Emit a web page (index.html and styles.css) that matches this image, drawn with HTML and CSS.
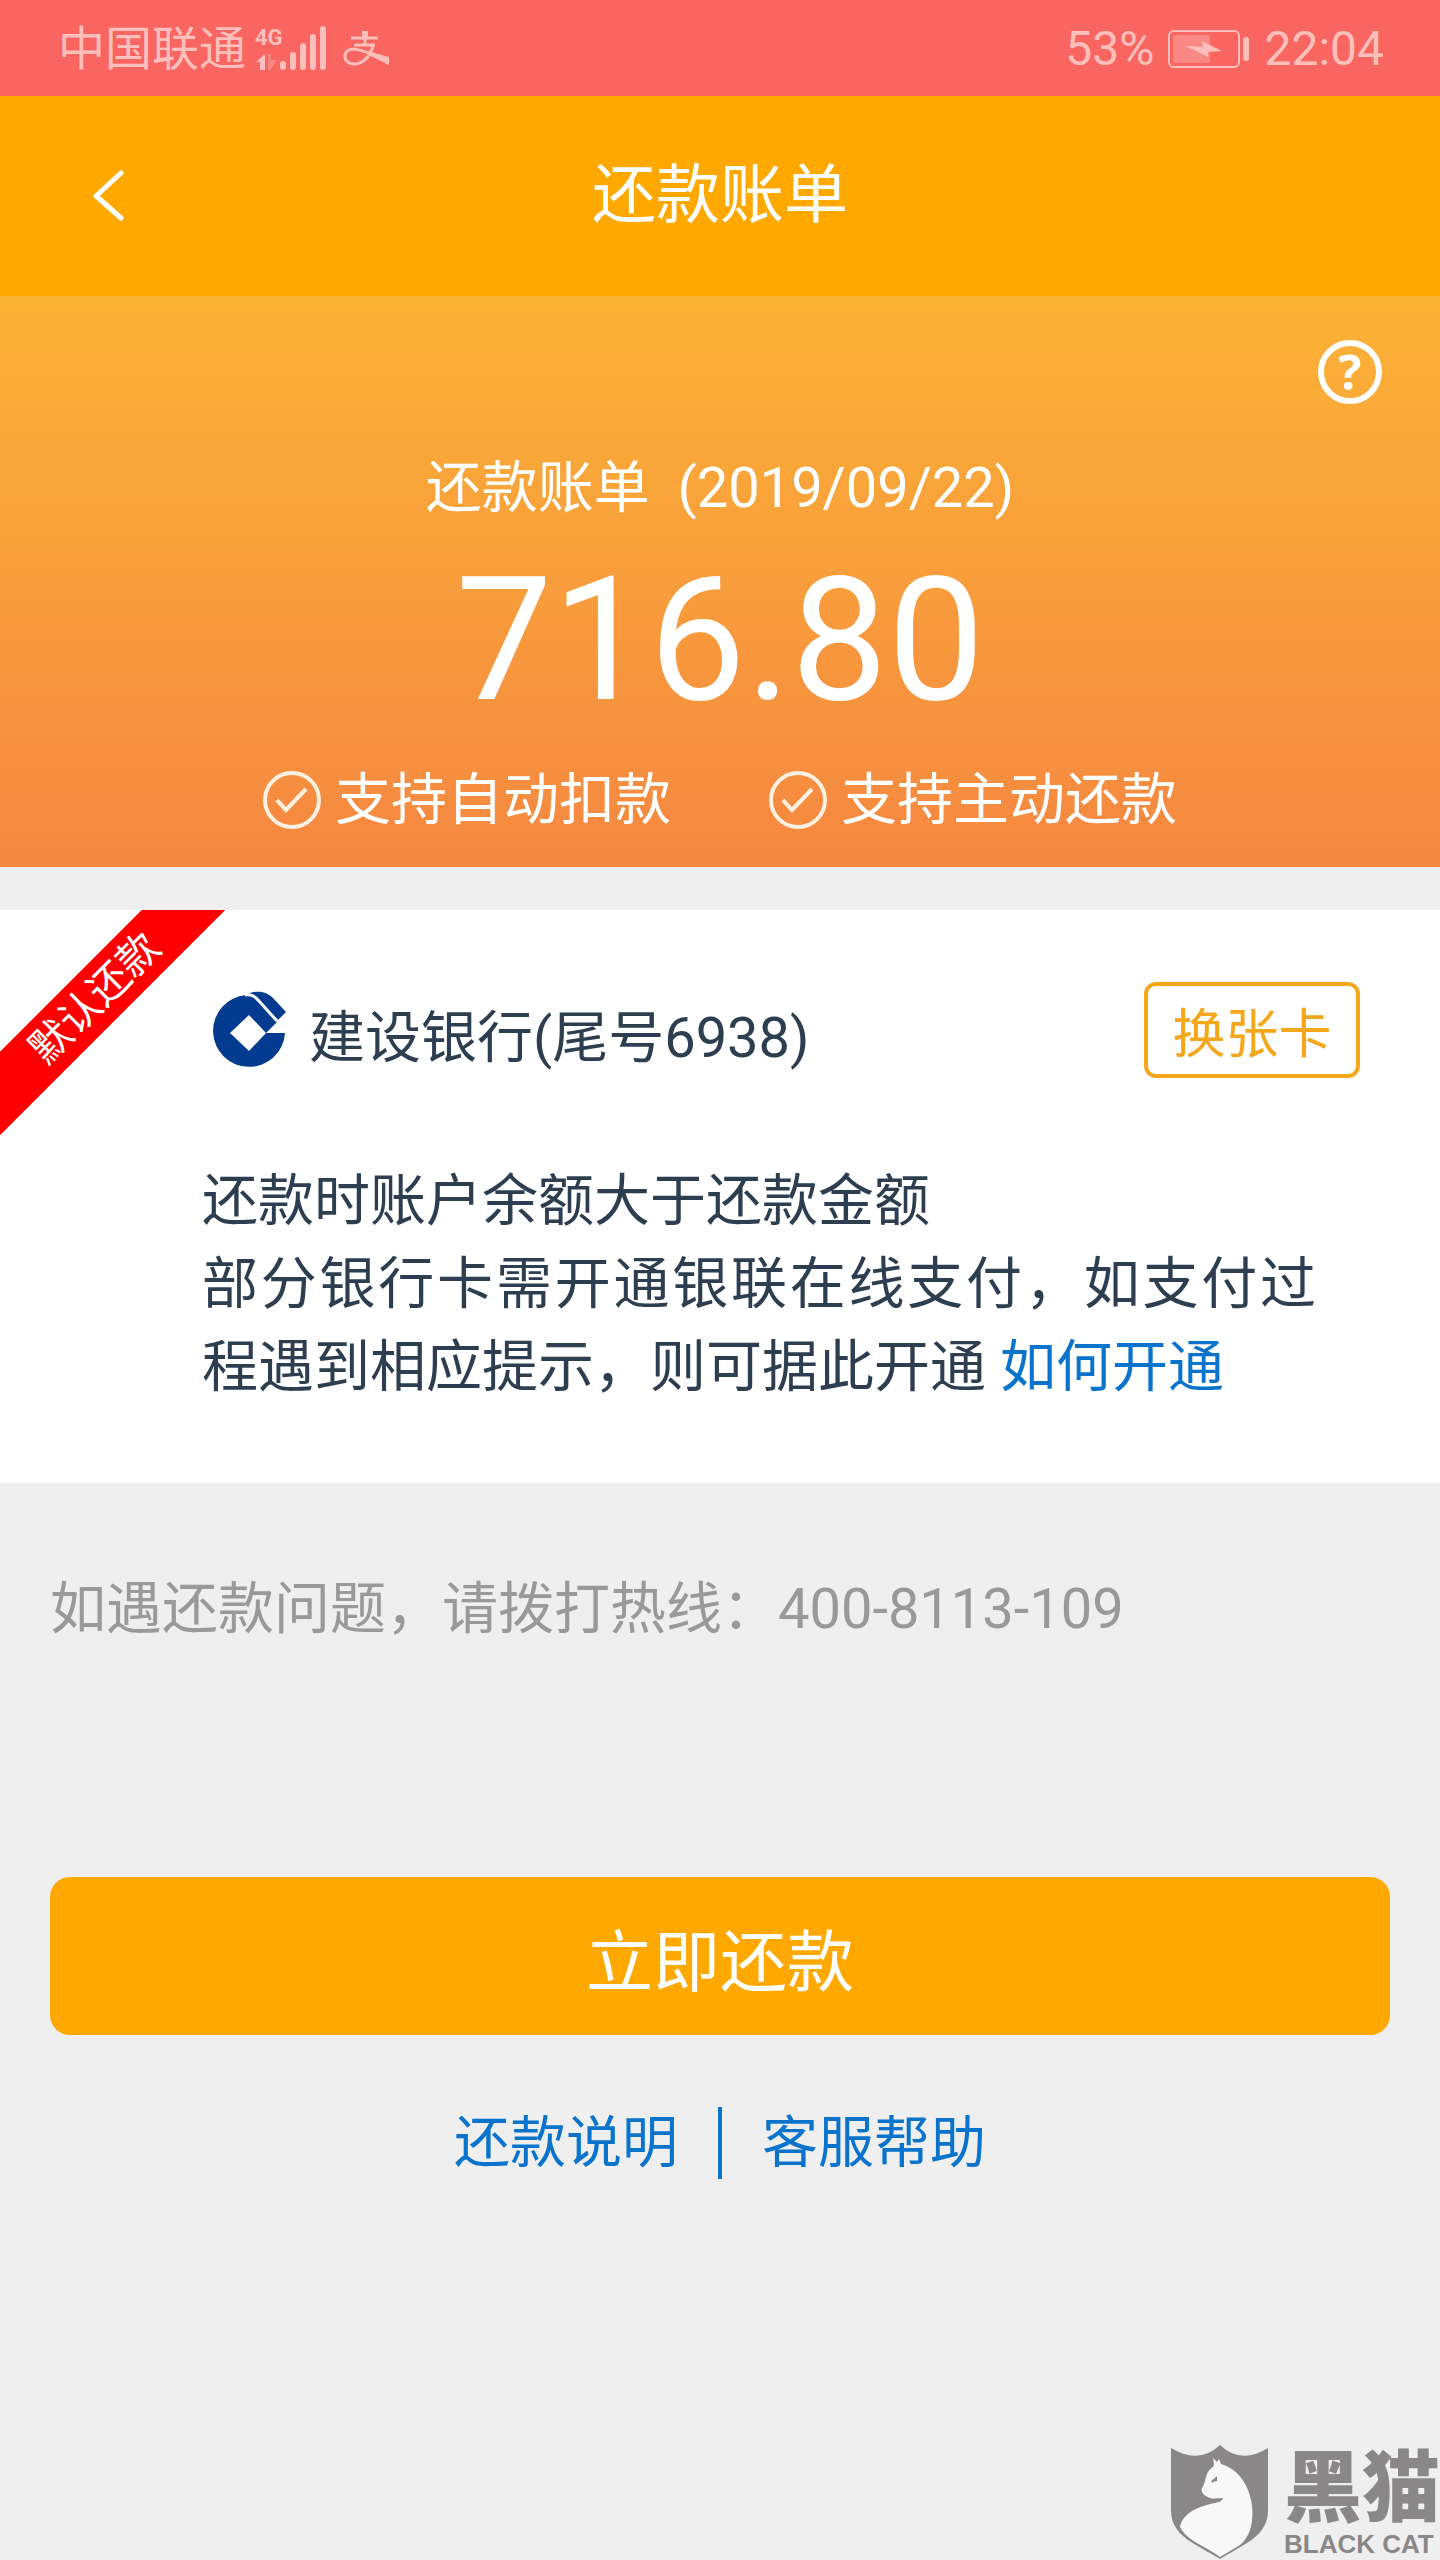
FILE: index.html
```html
<!DOCTYPE html>
<html lang="zh-CN">
<head>
<meta charset="UTF-8">
<meta name="viewport" content="width=device-width, initial-scale=1.0">
<title>还款账单</title>
<link rel="stylesheet" href="styles.css">
</head>
<body>

<div class="status-bar">
    <div class="status-left">
        <span>中国联通</span>
        <svg class="signal" viewBox="0 0 72 46" aria-hidden="true">
            <text class="signal-text" x="0" y="19">4G</text>
            <path d="M10 28v16H5V36H1z"/>
            <path d="M13 28h3v6h6l-7 10h-2z" opacity="0.35"/>
            <rect x="25" y="35" width="6" height="9" rx="3"/>
            <rect x="35" y="26" width="6" height="18" rx="3"/>
            <rect x="45" y="17" width="6" height="27" rx="3"/>
            <rect x="55" y="8" width="6" height="36" rx="3"/>
            <rect x="65" y="0" width="6" height="44" rx="3"/>
        </svg>
        <svg class="alipay" viewBox="0 0 48 36" aria-hidden="true">
            <path d="M8 7h27M22 0v15M11 14h21" fill="none" stroke="currentColor" stroke-width="3"/>
            <path d="M19 0h6v6h-6z"/>
            <path d="M30 14C28 25 20 33 11 33C-1 33 -1 18 10 18C20 18 31 25 46 31" fill="none" stroke="currentColor" stroke-width="3"/>
            <path d="M24 20L46 26V34L26 24z"/>
        </svg>
    </div>
    <div class="status-right">
        <span>53%</span>
        <svg class="battery" viewBox="0 0 82 40" aria-hidden="true">
            <rect x="1" y="2" width="70" height="36" rx="5" fill="none" stroke="currentColor" stroke-width="2"/>
            <rect x="5" y="6" width="37" height="28" rx="2" opacity="0.4"/>
            <path d="M18 17l17 1-1-6 20 10-14 1v5z"/>
            <rect x="75" y="8" width="6" height="24" rx="3"/>
        </svg>
        <span>22:04</span>
    </div>
</div>

<header class="navbar">
    <button class="back-btn" type="button" aria-label="返回">
        <svg viewBox="0 0 34 54"><path d="M31 4L6 27L31 49"/></svg>
    </button>
    <h1>还款账单</h1>
</header>

<section class="bill">
    <button class="help-btn" type="button" aria-label="帮助">?</button>
    <p class="bill-date">还款账单&nbsp; (2019/09/22)</p>
    <p class="bill-amount">716.80</p>
    <ul class="features">
        <li>
            <svg viewBox="0 0 58 58"><circle cx="29" cy="29" r="27"/><path d="M14 29l9 10 20-21"/></svg>
            支持自动扣款
        </li>
        <li>
            <svg viewBox="0 0 58 58"><circle cx="29" cy="29" r="27"/><path d="M14 29l9 10 20-21"/></svg>
            支持主动还款
        </li>
    </ul>
</section>

<section class="card">
    <span class="ribbon">默认还款</span>
    <div class="bank">
        <svg class="bank-logo" viewBox="0 0 76 80" aria-hidden="true">
            <path d="M34 5C43 4 49 8 55 14L65 32L54 43L37 25L18 43L37 61L54 43H73A36 36 0 1 1 34 5z"/>
            <path d="M33 5C46 -1 55 2 61 8L74 22L66 30L47 10C43 6 39 5 33 5z"/>
            <path d="M33 5C41 4 43 7 47 11L65 31" fill="none" stroke="#fff" stroke-width="3"/>
        </svg>
        <span class="bank-name">建设银行(尾号6938)</span>
        <button class="change-btn" type="button">换张卡</button>
    </div>
    <p class="note">还款时账户余额大于还款金额<br>部分银行卡需开通银联在线支付，如支付过程遇到相应提示，则可据此开通 <a href="#">如何开通</a></p>
</section>

<main class="actions">
    <p class="hotline">如遇还款问题，请拨打热线：400-8113-109</p>
    <button class="pay-btn" type="button">立即还款</button>
    <nav class="links">
        <a href="#">还款说明</a>
        <a href="#">客服帮助</a>
    </nav>
</main>

<div class="watermark">
    <svg viewBox="0 0 98 116" aria-hidden="true">
        <path fill="#8a8788" d="M0 4Q28 21 49 1Q70 21 97 4V66C97 92 75 99 49 115C23 99 0 92 0 66z"/>
        <path fill="#f8f8f8" d="M42 14L46 18L48 15L50 20C72 26 84 52 81 76C80 88 75 96 69 101L49 113C33 101 17 98 9 83C12 68 29 62 44 59C49 58 51 57 52 54C46 54 41 56 35 52C31 50 30 47 31 44C34 40 34 35 36 30C38 25 42 24 43 21z"/>
        <path fill="#8a8788" d="M40 37l4-3-2 5zM44 34l2-2v5l-4 1z"/>
    </svg>
    <div class="watermark-text">
        <strong>黑猫</strong>
        <span>BLACK CAT</span>
    </div>
</div>

</body>
</html>
```
FILE: styles.css
```css
* {
    box-sizing: border-box;
}
body {
    margin: 0;
    min-height: 100vh;
    position: relative;
    background: #efefef;
    color: #2c3e50;
    font-family: Roboto, "Noto Sans CJK SC", sans-serif;
    font-size: 56px;
    line-height: 84px;
}
h1, p, ul {
    margin: 0;
    padding: 0;
    font-weight: normal;
}
button {
    font-family: inherit;
    padding: 0;
    border: none;
    background: none;
    cursor: pointer;
}
a {
    color: #0a74cc;
    text-decoration: none;
}
svg {
    display: block;
    flex: none;
}

/* status bar */
.status-bar {
    display: flex;
    justify-content: space-between;
    align-items: center;
    height: 96px;
    padding: 2px 56px 0 58px;
    background: #f96560;
    color: #fcbfbc;
    font-size: 48px;
    line-height: 94px;
}
.status-bar svg {
    fill: currentColor;
}
.status-left, .status-right {
    display: flex;
    align-items: center;
}
.status-left {
    font-size: 47px;
}
.signal {
    width: 72px;
    height: 46px;
    margin: 0 16px 0 9px;
}
.signal-text {
    font-size: 22px;
    font-weight: bold;
}
.alipay {
    width: 48px;
    height: 36px;
}
.battery {
    width: 82px;
    height: 40px;
    margin: 0 14px;
}

/* title bar */
.navbar {
    display: grid;
    grid-template-columns: 1fr auto 1fr;
    align-items: center;
    height: 200px;
    padding: 0 90px;
    background: #ffa800;
    color: #fff;
}
.navbar h1 {
    font-size: 64px;
}
.back-btn {
    justify-self: start;
}
.back-btn svg {
    width: 34px;
    height: 54px;
    fill: none;
    stroke: #fff;
    stroke-width: 5;
    stroke-linecap: round;
    stroke-linejoin: round;
}

/* bill summary */
.bill {
    display: flex;
    flex-direction: column;
    align-items: center;
    padding: 44px 58px 25px;
    background: linear-gradient(#fbb336, #f58741);
    color: #fff;
}
.help-btn {
    align-self: flex-end;
    width: 64px;
    height: 64px;
    border: 6px solid #fff;
    border-radius: 50%;
    color: #fff;
    font-family: "Open Sans", sans-serif;
    font-size: 48px;
    font-weight: bold;
    line-height: 52px;
}
.bill-date {
    margin-top: 42px;
}
.bill-amount {
    font-size: 172px;
    line-height: 220px;
}
.features {
    display: flex;
    gap: 98px;
    margin-top: 8px;
    list-style: none;
}
.features li {
    display: flex;
    align-items: center;
    gap: 14px;
}
.features svg {
    width: 58px;
    height: 58px;
    fill: none;
    stroke: #fff1e2;
    stroke-width: 4;
}

/* bank card */
.card {
    position: relative;
    overflow: hidden;
    margin-top: 43px;
    padding: 72px 80px 74px 202px;
    background: #fff;
}
.ribbon {
    position: absolute;
    top: 61px;
    left: -77px;
    width: 340px;
    padding-left: 6px;
    background: #f00;
    color: #fff;
    font-size: 41px;
    line-height: 59px;
    text-align: center;
    transform: rotate(-45deg);
}
.bank {
    display: flex;
    align-items: center;
    padding-left: 10px;
}
.bank-logo {
    width: 76px;
    height: 80px;
    fill: #023b90;
}
.bank-name {
    flex: 1;
    padding: 16px 0 0 21px;
    line-height: 80px;
}
.change-btn {
    width: 216px;
    height: 96px;
    border: 4px solid #f5a71b;
    border-radius: 12px;
    color: #f5a71b;
    font-size: 53px;
}
.note {
    margin: 82px 44px 0 0;
    line-height: 83px;
    text-align: justify;
}

/* payment */
.actions {
    padding: 84px 50px 0;
}
.hotline {
    color: #999;
}
.pay-btn {
    display: block;
    width: 100%;
    height: 158px;
    margin-top: 226px;
    border-radius: 20px;
    background: #ffa800;
    color: #fff;
    font-size: 67px;
}
.links {
    display: flex;
    justify-content: center;
    margin-top: 72px;
    line-height: 72px;
}
.links a {
    padding: 0 40px;
}
.links a + a {
    border-left: 4px solid #0a74cc;
}

/* watermark */
.watermark {
    position: absolute;
    right: 0;
    bottom: 0;
    display: flex;
    align-items: flex-end;
    gap: 15px;
    color: #8a8788;
}
.watermark svg {
    width: 98px;
    height: 116px;
}
.watermark-text {
    display: flex;
    flex-direction: column;
}
.watermark-text strong {
    font-size: 78px;
    font-weight: 900;
    line-height: 76px;
}
.watermark-text span {
    font-family: "Liberation Sans", sans-serif;
    font-size: 26px;
    font-weight: bold;
    line-height: 32px;
}
```
